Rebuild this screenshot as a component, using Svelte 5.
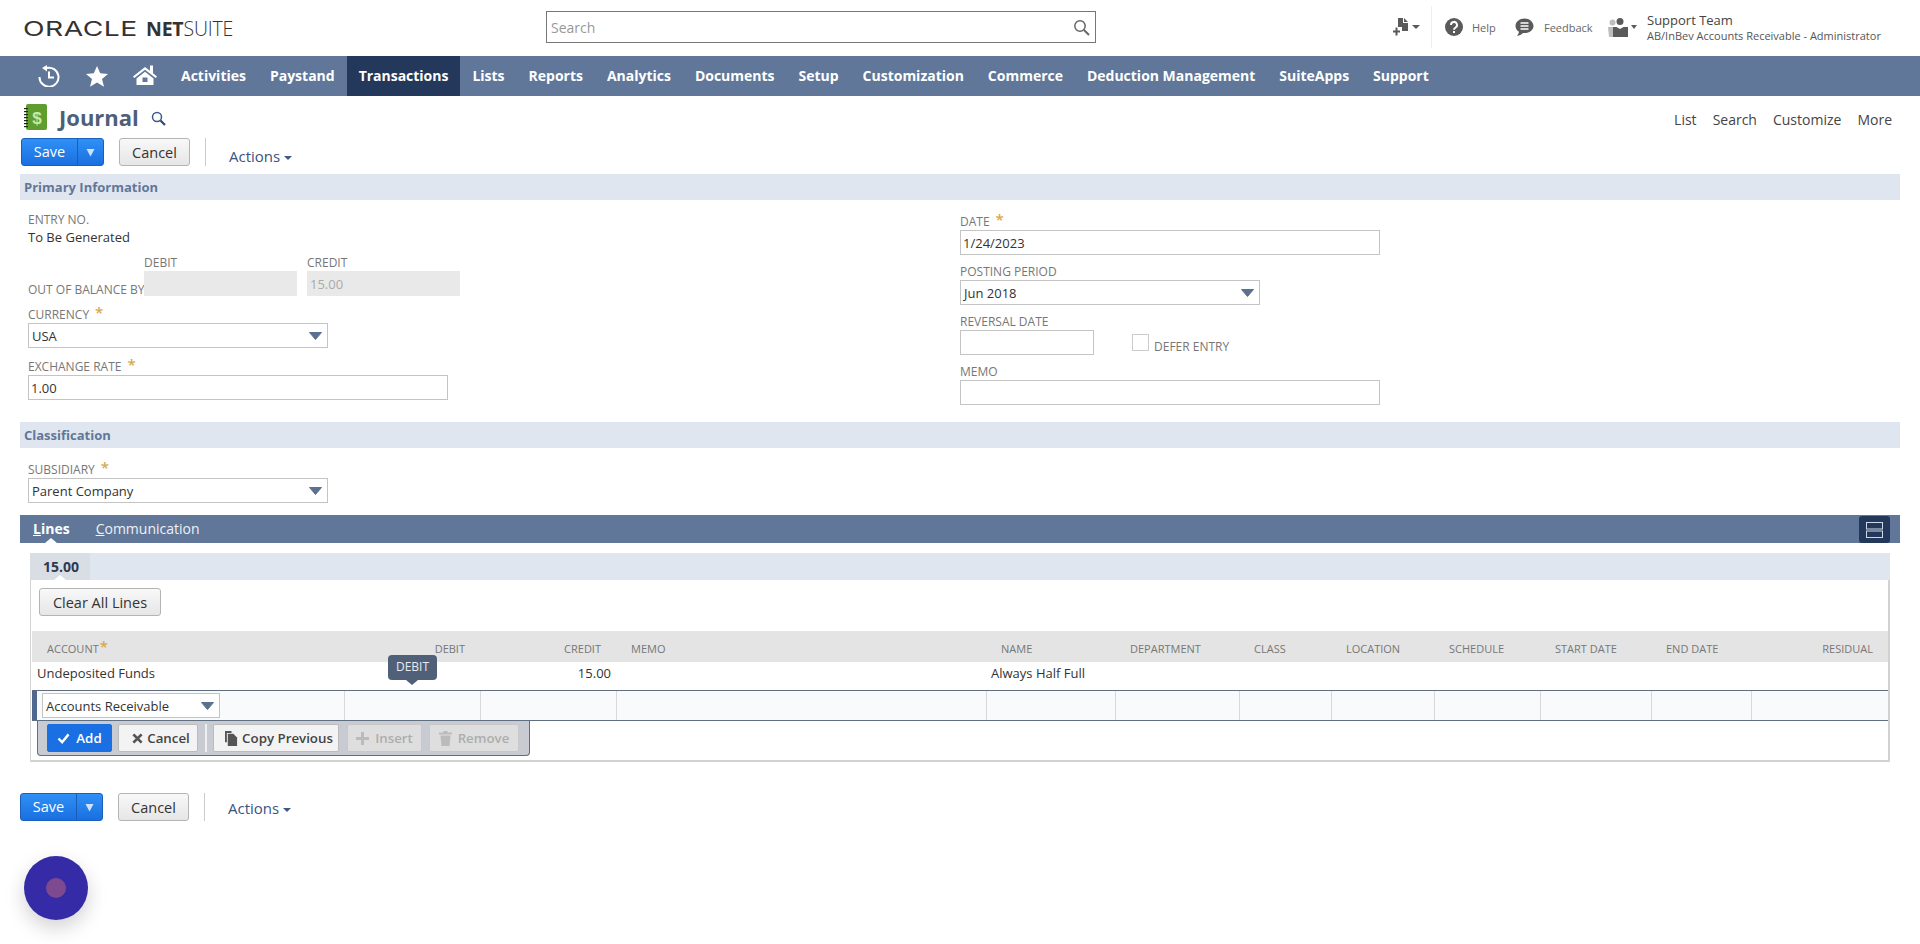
<script>
  const menu = ['Activities','Paystand','Transactions','Lists','Reports','Analytics','Documents','Setup','Customization','Commerce','Deduction Management','SuiteApps','Support'];
  const cols = [
    {t:'ACCOUNT',req:true},{t:'DEBIT',r:true},{t:'CREDIT',r:true},{t:'MEMO'},{t:'NAME'},{t:'DEPARTMENT'},{t:'CLASS'},{t:'LOCATION'},{t:'SCHEDULE'},{t:'START DATE'},{t:'END DATE'},{t:'RESIDUAL',r:true}
  ];
  const links = ['List','Search','Customize','More'];
</script>

{#snippet actionRow(cls)}
  <div class="actions {cls}">
    <div class="save"><span class="save-main">Save</span><span class="save-drop"><svg width="9" height="9" viewBox="0 0 9 9"><path d="M0.5 1h8L4.5 8.5z" fill="#cfe3fb"/></svg></span></div>
    <button class="btn cancel-btn">Cancel</button>
    <span class="vsep"></span>
    <span class="act-link">Actions<i class="caret"></i></span>
  </div>
{/snippet}

{#snippet arrow()}
  <svg class="sel-arrow" width="13" height="8" viewBox="0 0 13 8"><path d="M0.5 0.500h12L6.500 7.500z" fill="#5b7191" stroke="#5b7191" stroke-linejoin="round"/></svg>
{/snippet}

<div class="page">
  <header class="top">
    <div class="logo"><span class="lo-wrap"><span class="lo">ORACLE</span></span><span class="ns"><b>NET</b>SUITE</span></div>
    <div class="search">
      <input placeholder="Search" />
      <svg width="17" height="17" viewBox="0 0 17 17"><circle cx="7" cy="7" r="5.200" fill="none" stroke="#666" stroke-width="1.500"/><path d="M11 11l5 5" stroke="#666" stroke-width="2"/></svg>
    </div>
    <div class="tools">
      <span class="newrec">
        <svg width="16" height="18" viewBox="0 0 16 18"><path d="M5 0h5v5h5v8H9v-4H5z" fill="#5a5a5a"/><path d="M11 0l4 4h-4z" fill="#5a5a5a"/><path d="M3.500 9.500v8M0 13.500h7" stroke="#5a5a5a" stroke-width="2"/></svg>
        <i class="caret gray"></i>
      </span>
      <span class="tsep"></span>
      <svg class="t-help" width="18" height="18" viewBox="0 0 18 18"><circle cx="9" cy="9" r="9" fill="#5a5a5a"/><path d="M6 7a3 3 0 1 1 4.500 2.500c-1 .6-1.500 1-1.500 2.300" fill="none" stroke="#fff" stroke-width="2"/><rect x="8" y="13" width="2" height="2" fill="#fff"/></svg>
      <span class="t-txt help">Help</span>
      <svg class="t-fb" width="19" height="19" viewBox="0 0 19 19"><path d="M9.500 0.500C4.500 0.500 .5 3.800 .5 8c0 2.500 1.300 4.500 3.500 5.800-.2 1.500-1 3-2 4.200 2.500-.4 4.500-1.500 6-3 .5 0 1 .1 1.500.1 5 0 9-3.200 9-7.100s-4-7.500-9-7.500z" fill="#5a5a5a"/><path d="M5.500 5h8M5.500 8h8M5.500 11h8" stroke="#fff" stroke-width="1.500"/></svg>
      <span class="t-txt fb">Feedback</span>
      <span class="roles">
        <svg width="20" height="19" viewBox="0 0 20 19"><circle cx="4.500" cy="4.500" r="3" fill="#bdbdbd"/><path d="M0 9h6v10H1z" fill="#bdbdbd"/><circle cx="12" cy="3.500" r="3.500" fill="#5a5a5a"/><path d="M5 9h3.500l3.500 2 3.500-2H20v10H5z" fill="#5a5a5a"/></svg>
        <i class="caret gray small"></i>
      </span>
      <div class="who"><div class="who1">Support Team</div><div class="who2">AB/InBev Accounts Receivable - Administrator</div></div>
    </div>
  </header>

  <nav class="nav">
    <span class="nav-ico ic1"><svg width="22" height="22" viewBox="0 0 22 22"><path d="M1.500 12a9.500 9.500 0 1 0 7-9" fill="none" stroke="#fff" stroke-width="2"/><path d="M9 0L4 3l5 3.500z" fill="#fff"/><path d="M11 6.500V12.500h5" fill="none" stroke="#fff" stroke-width="2"/></svg></span>
    <span class="nav-ico ic2"><svg width="22" height="21" viewBox="0 0 22 21"><path d="M11 0l3.200 7.300 7.800.6-6 5.100 2 7.700L11 16.500 4 20.700l2-7.700-6-5.100 7.800-.6z" fill="#fff"/></svg></span>
    <span class="nav-ico ic3"><svg width="24" height="21" viewBox="0 0 24 21"><path d="M12 3L0 12.500l1.300 1.500L12 5.700 22.700 14l1.300-1.500-4-3.200V1.500h-3v5.300z" fill="#fff"/><path fill-rule="evenodd" d="M12 7.800L3.500 14.500V21h17v-6.500zM9.500 13.500h5V18h-5z" fill="#fff"/></svg></span>
    {#each menu as m}
      <span class="nav-item" class:active={m === 'Transactions'}>{m}</span>
    {/each}
  </nav>

  <div class="content">
    <div class="title-row">
      <div class="title-left">
        <svg class="jicon" width="23" height="26" viewBox="0 0 23 26"><rect x="2" y="0" width="21" height="26" rx="2" fill="#5f9e2e"/><g fill="#222"><rect x="0" y="4" width="4" height="1.200"/><rect x="0" y="7" width="4" height="1.200"/><rect x="0" y="10" width="4" height="1.200"/><rect x="0" y="13" width="4" height="1.200"/><rect x="0" y="16" width="4" height="1.200"/><rect x="0" y="19" width="4" height="1.200"/><rect x="0" y="22" width="4" height="1.200"/></g><text x="13" y="19.500" text-anchor="middle" font-size="17" font-family="Liberation Sans" font-weight="700" fill="#cbe8a0">$</text></svg>
        <h1>Journal</h1>
        <svg class="jsearch" width="15" height="15" viewBox="0 0 15 15"><circle cx="6" cy="6" r="4.500" fill="none" stroke="#3b5a8c" stroke-width="1.500"/><path d="M9.500 9.500l4.500 4.500" stroke="#2e4a7a" stroke-width="2.200"/></svg>
      </div>
      <div class="links">{#each links as l}<span>{l}</span>{/each}</div>
    </div>

    {@render actionRow('first')}

    <div class="bar">Primary Information</div>
    <div class="form-grid">
      <div class="col left">
        <div class="f entry"><span class="label">ENTRY NO.</span><div class="val">To Be Generated</div></div>
        <div class="f balance">
          <span class="label oob">OUT OF BALANCE BY</span>
          <div class="bal"><span class="label">DEBIT</span><input class="dis" readonly /></div>
          <div class="bal"><span class="label">CREDIT</span><input class="dis" readonly value="15.00" /></div>
        </div>
        <div class="f cur"><span class="label">CURRENCY<i class="req">*</i></span><div class="sel w300">USA{@render arrow()}</div></div>
        <div class="f"><span class="label">EXCHANGE RATE<i class="req">*</i></span><input class="txt w420" readonly value="1.00" /></div>
      </div>
      <div class="col right">
        <div class="f"><span class="label">DATE<i class="req">*</i></span><input class="txt w420" readonly value="1/24/2023" /></div>
        <div class="f"><span class="label">POSTING PERIOD</span><div class="sel w300">Jun 2018{@render arrow()}</div></div>
        <div class="f rev">
          <div><span class="label">REVERSAL DATE</span><input class="txt w134" readonly /></div>
          <div class="defer"><span class="chk"></span><span class="label">DEFER ENTRY</span></div>
        </div>
        <div class="f"><span class="label">MEMO</span><input class="txt w420" readonly /></div>
      </div>
    </div>

    <div class="bar">Classification</div>
    <div class="classif">
      <span class="label">SUBSIDIARY<i class="req">*</i></span>
      <div class="sel w300">Parent Company{@render arrow()}</div>
    </div>

    <div class="tabs">
      <span class="tab on"><u>L</u>ines<i class="notch"></i></span>
      <span class="tab"><u>C</u>ommunication</span>
      <span class="layout-btn"><svg width="17" height="18" viewBox="0 0 17 18"><rect x=".5" y="1.500" width="16" height="6.500" fill="none" stroke="#cfd8e6"/><rect x=".5" y="10" width="16" height="6.500" fill="none" stroke="#cfd8e6"/></svg></span>
    </div>

    <div class="box">
      <div class="subbar"><span class="subtab">15.00<i class="notch"></i></span></div>
      <button class="btn clear">Clear All Lines</button>
      <div class="cols thead">
        {#each cols as c}
          <span class="th" class:r={c.r}>{c.t}{#if c.req}<i class="req tight">*</i>{/if}</span>
        {/each}
      </div>
      <div class="cols trow">
        <span class="td">Undeposited Funds</span>
        <span class="td tip-host"><span class="tip">DEBIT</span></span>
        <span class="td r">15.00</span>
        <span class="td"></span>
        <span class="td">Always Half Full</span>
      </div>
      <div class="cols edit">
        {#each cols as c, i}
          <span class="ec" class:first={i === 0}>{#if i === 0}<div class="sel acct">Accounts Receivable{@render arrow()}</div>{/if}</span>
        {/each}
      </div>
      <div class="mach">
        <button class="mb add"><svg width="13" height="11" viewBox="0 0 14 12"><path d="M1.500 6l4 4 7-8.500" fill="none" stroke="#fff" stroke-width="2.600"/></svg>Add</button>
        <button class="mb mcancel"><svg width="11" height="11" viewBox="0 0 12 12"><path d="M1.500 1.500l9 9M10.500 1.500l-9 9" stroke="#555" stroke-width="3"/></svg>Cancel</button>
        <span class="msep"></span>
        <button class="mb copy"><svg width="13" height="15" viewBox="0 0 14 16"><path d="M0 0h7v2H2v10H0z" fill="#555"/><path d="M3 3h6l4 4v9H3z" fill="#555"/></svg>Copy Previous</button>
        <button class="mb off insert"><svg width="13" height="13" viewBox="0 0 13 13"><path d="M6.500 0v13M0 6.500h13" stroke="#bbb" stroke-width="3"/></svg>Insert</button>
        <button class="mb off remove"><svg width="13" height="15" viewBox="0 0 13 15"><path d="M0 1.500h13v2H0zM4.500 0h4v1.500h-4zM1.500 4.500h10L10.500 15h-8z" fill="#bbb"/></svg>Remove</button>
      </div>
    </div>

    {@render actionRow('last')}
  </div>

  <div class="bubble"><span class="dot"></span></div>
</div>

<style>
  :global(body) { margin: 0; background: #fff; font-family: "Open Sans", sans-serif; }
  .page { width: 1920px; height: 944px; overflow: hidden; position: relative; color: #333; font-size: 13px; }
  i { font-style: normal; }
  button, input { font-family: "Open Sans", sans-serif; }

  .top { height: 56px; display: flex; align-items: center; padding-left: 23px; box-sizing: border-box; }
  .logo { width: 523px; display: flex; align-items: center; color: #333; flex: none; }
  .lo-wrap { width: 123px; display: block; }
  .lo { display: inline-block; font-family: Inter, sans-serif; font-size: 20px; font-weight: 400; letter-spacing: .35px; transform: scaleX(1.41); transform-origin: left center; margin-top: 1px; }
  .ns { font-family: "Open Sans", sans-serif; font-size: 19.500px; font-weight: 300; letter-spacing: -.2px; }
  .ns b { font-weight: 700; }
  .search { width: 550px; height: 32px; margin-top: -2px; border: 1px solid #777; box-sizing: border-box; display: flex; align-items: center; padding: 0 5px 0 4px; flex: none; }
  .search input { flex: 1; border: 0; outline: 0; font-size: 14px; padding: 0; color: #333; }
  .search input::placeholder { color: #999; opacity: 1; }
  .tools { display: flex; align-items: center; height: 54px; margin-bottom: 2px; margin-left: 297px; }
  .newrec { display: flex; align-items: center; gap: 3px; width: 38px; }
  .caret { display: inline-block; width: 0; height: 0; border-left: 4px solid transparent; border-right: 4px solid transparent; border-top: 4px solid #3d5a86; margin-left: 4px; vertical-align: 2px; }
  .caret.gray { border-top-color: #5a5a5a; margin-left: 0; }
  .caret.small { border-left-width: 3.500px; border-right-width: 3.500px; }
  .tsep { width: 1px; height: 42px; background: #eee; margin-right: 13px; }
  .t-txt { font-size: 11px; color: #666; }
  .help { margin-left: 9px; width: 43px; }
  .fb { margin-left: 10px; width: 64px; }
  .roles { display: flex; align-items: center; gap: 3px; width: 39px; }
  .who1 { font-size: 13px; line-height: 16px; color: #444; }
  .who2 { font-size: 11px; line-height: 15px; color: #555; }

  .nav { height: 40px; background: #607799; display: flex; align-items: center; box-sizing: border-box; padding-left: 169px; position: relative; }
  .nav-ico { position: absolute; top: 9px; line-height: 0; }
  .ic1 { left: 38px; }
  .ic2 { left: 86px; top: 10px; }
  .ic3 { left: 133px; top: 8px; }
  .nav-item { height: 40px; line-height: 40px; padding: 0 12px; color: #fff; font-size: 14px; font-weight: 700; letter-spacing: -.01px; }
  .nav-item.active { background: #24385b; }

  .content { padding: 0 20px; }
  .title-row { height: 42px; display: flex; justify-content: space-between; align-items: center; }
  .title-left { display: flex; align-items: center; padding-left: 4px; }
  .jicon { margin-top: -1px; }
  h1 { margin: 0 0 0 12px; font-size: 22px; font-weight: 700; color: #4d5f79; line-height: 30px; }
  .jsearch { margin-left: 12px; margin-top: 3px; }
  .links { display: flex; gap: 16px; padding-right: 8px; font-size: 14px; color: #444; margin-top: 4px; }

  .actions { display: flex; height: 28px; align-items: center; }
  .actions.first { padding-left: 1px; }
  .actions.last { margin-top: 31px; }
  .save { display: flex; width: 83px; height: 28px; box-sizing: border-box; border: 1px solid #1a60bb; border-radius: 3px; background: linear-gradient(#2f90f6, #1a6fe0); color: #fff; font-size: 14.500px; font-weight: 400; }
  .save-main { width: 55px; text-align: center; line-height: 25px; border-right: 1px solid #1a5fb5; }
  .save-drop { flex: 1; display: flex; align-items: center; justify-content: center; }
  .btn { font-size: 14.500px; font-weight: 400; color: #333; background: linear-gradient(#f8f8f8, #e6e6e6); border: 1px solid #b4b4b4; border-radius: 3px; padding: 0; box-sizing: border-box; height: 28px; }
  .cancel-btn { width: 71px; margin-left: 15px; }
  .vsep { width: 1px; height: 28px; background: #ccc; margin-left: 15px; }
  .act-link { margin-left: 23px; font-size: 15px; color: #3a5480; padding-top: 8px; }
  .last .act-link { padding-top: 1px; }

  .bar { height: 26px; background: #e0e6ef; color: #607799; font-size: 13px; font-weight: 700; line-height: 26px; padding-left: 4px; }
  .actions + .bar { margin-top: 8px; }

  .form-grid { display: grid; grid-template-columns: 940px 1fr; padding-bottom: 6px; }
  .col.left { padding: 13px 0 0 8px; }
  .col.right { padding-top: 16px; }
  .label { display: block; font-size: 12px; line-height: 12px; padding-bottom: 2px; color: #777; font-weight: 400; white-space: nowrap; }
  .entry .label { padding: 1px 0; }
  .req { color: #d6a94b; font-size: 15px; line-height: 0; margin-left: 6px; font-weight: 600; position: relative; top: -1px; }
  .req.tight { margin-left: 1px; }
  .val { font-size: 13px; line-height: 20px; color: #333; }
  .f { margin-bottom: 11px; }
  .entry { margin-bottom: 10px; }
  .balance { display: flex; align-items: flex-end; margin-bottom: 13px; }
  .label.oob { width: 116px; margin-bottom: -2px; }
  .bal { width: 163px; }
  .bal input { display: block; }
  .cur { margin-bottom: 13px; }
  .dis { width: 153px; height: 25px; box-sizing: border-box; border: 0; background: #e9e9e9; color: #aaa; font-size: 13px; padding: 0 3px; outline: 0; }
  .txt { display: block; height: 25px; box-sizing: border-box; border: 1px solid #c4c4c4; font-size: 13px; color: #333; padding: 0 2px; outline: 0; background: #fff; }
  .w420 { width: 420px; }
  .w134 { width: 134px; }
  .sel { height: 25px; box-sizing: border-box; border: 1px solid #c4c4c4; font-size: 13px; line-height: 24px; padding: 1px 5px 0 3px; color: #333; position: relative; display: flex; justify-content: space-between; align-items: center; background: #fff; }
  .sel-arrow { margin-top: -1px; }
  .w300 { width: 300px; }
  .rev { display: flex; }
  .defer { display: flex; margin-left: 38px; padding-top: 18px; gap: 5px; align-items: flex-start; }
  .defer .label { margin-top: 7px; }
  .chk { width: 17px; height: 17px; box-sizing: border-box; border: 1px solid #ccc; display: block; }

  .classif { padding: 16px 0 12px 8px; }

  .tabs { height: 28px; background: #607799; display: flex; align-items: center; position: relative; font-size: 14px; color: #eef1f6; padding-left: 13px; gap: 26px; }
  .tab { position: relative; height: 28px; line-height: 28px; }
  .tab.on { font-weight: 700; color: #fff; }
  .notch { position: absolute; bottom: 0; left: 50%; margin-left: -6px; width: 0; height: 0; border-left: 6px solid transparent; border-right: 6px solid transparent; border-bottom: 5px solid #fff; }
  .layout-btn { margin-left: auto; margin-right: 10px; width: 31px; height: 27px; margin-top: 1px; background: #24385b; border-radius: 3px; display: flex; align-items: center; justify-content: center; line-height: 0; }

  .box { margin: 10px 10px 0; height: 209px; box-sizing: border-box; border-left: 1px solid #d2d2d2; border-right: 2px solid #d2d2d2; border-bottom: 2px solid #d2d2d2; padding: 0 0 0 1px; }
  .subbar { height: 27px; background: #e0e6ef; margin: 0 -2px 0 -2px; }
  .subtab { position: relative; display: inline-block; width: 60px; height: 27px; padding-left: 2px; box-sizing: border-box; background: #d9dee5; font-size: 14px; font-weight: 700; color: #2c3a50; text-align: center; line-height: 27px; }
  .clear { display: block; margin: 8px 0 15px 7px; width: 122px; }
  .cols { display: grid; grid-template-columns: 312px 136px 136px 370px 129px 124px 92px 103px 106px 111px 100px 137px; }
  .thead { height: 31px; background: #e4e4e4; align-items: center; }
  .th { font-size: 11px; color: #777; padding: 3px 15px 0; white-space: nowrap; }
  .th.r { text-align: right; }
  .trow { height: 28px; align-items: start; font-size: 13px; color: #333; }
  .td { padding: 0 5px; white-space: nowrap; line-height: 23px; }
  .td.r { text-align: right; }
  .tip-host { position: relative; height: 23px; }
  .tip { position: absolute; left: 44px; top: -7px; width: 49px; height: 25px; border-radius: 4px; background: #4f6078; color: #e7ebf1; font-size: 12px; line-height: 24px; text-align: center; }
  .tip::after { content: ""; position: absolute; left: 18px; top: 25px; width: 0; height: 0; border-left: 6px solid transparent; border-right: 6px solid transparent; border-top: 5px solid #4f6078; }
  .edit { height: 31px; box-sizing: border-box; border-top: 1px solid #5f6f80; border-bottom: 1px solid #5f6f80; background: #f9fafb; }
  .ec { border-left: 1px solid #d9d9d9; position: relative; display: block; }
  .ec.first { border-left: 5px solid #50688f; padding: 2px 0 0 5px; }
  .acct { width: 178px; height: 25px; }
  .mach { margin-left: 5px; width: 493px; height: 35px; box-sizing: border-box; background: #c8ccd2; border: 1px solid #5f6f80; border-top: 0; border-radius: 0 0 4px 4px; display: flex; padding: 3px 0 0 9px; }
  .mb { height: 28px; box-sizing: border-box; border: 1px solid #bbb; border-radius: 2px; background: #f3f3f3; font-size: 13.300px; font-weight: 600; color: #444; padding: 0; display: flex; align-items: center; justify-content: center; gap: 4px; margin-right: 7px; }
  .add { width: 65px; background: #1a70e3; border-color: #1a70e3; color: #fff; margin-right: 6px; gap: 6px; }
  .mcancel { width: 80px; padding-left: 6px; }
  .msep { width: 2px; height: 28px; background: #f0f0f0; margin-right: 6px; }
  .copy { width: 126px; margin-right: 8px; padding-left: 6px; }
  .insert { width: 75px; gap: 6px; }
  .remove { width: 90px; margin: 0; gap: 6px; }
  .off { background: #dedede; color: #adadad; border-color: #c8c8c8; }

  .bubble { position: fixed; left: 24px; top: 856px; width: 64px; height: 64px; border-radius: 50%; background: #352ba6; box-shadow: 0 8px 20px rgba(0,0,0,.18); display: flex; align-items: center; justify-content: center; }
  .dot { width: 20px; height: 20px; border-radius: 50%; background: #7d4a90; }
</style>
